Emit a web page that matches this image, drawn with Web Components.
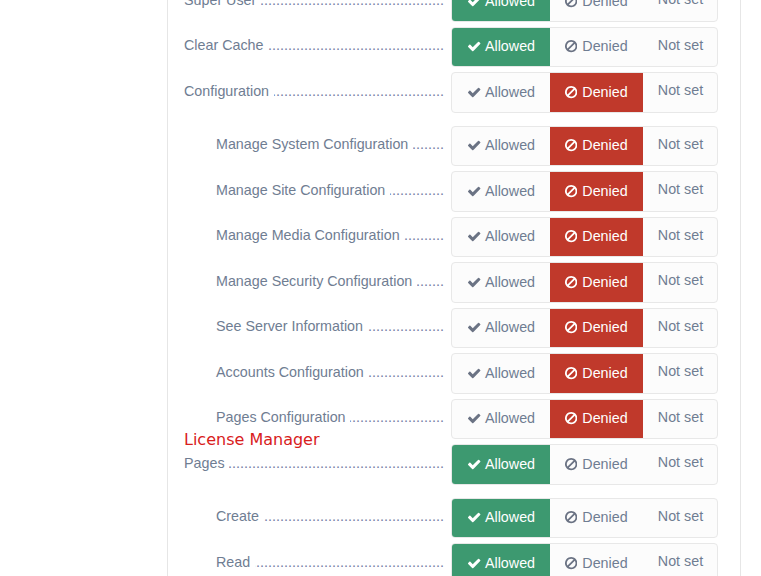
<!DOCTYPE html>
<html>
<head>
<meta charset="utf-8">
<style>
  html, body { margin: 0; height: 576px; overflow: hidden; background: #fff; }
  body { font-family: "Liberation Sans", Arial, sans-serif; }
</style>
</head>
<body>
<template id="row-template">
  <style>
    :host {
      display: flex;
      align-items: center;
      height: 40.5px;
      margin-bottom: 5px;
      font-size: 14.3px;
      color: #6f7d92;
    }
    :host([sub]) .label { padding-left: 32px; }
    :host([parent]) { margin-bottom: 13px; }
    .label {
      display: flex;
      flex: none;
      box-sizing: border-box;
      width: 260px;
      margin-right: 7px;
      white-space: nowrap;
      position: relative;
      top: -1.95px;
    }
    .dots {
      flex: 1;
      min-width: 0;
      margin-left: 4.6px;
      overflow: hidden;
      direction: rtl;
      font-size: 14.4px;
      color: #7480a4;
    }
    .group {
      display: flex;
      flex: none;
      width: 267px;
      height: 40.5px;
      box-sizing: border-box;
      border: 1px solid #e8e8e8;
      border-radius: 4px;
      background: #fcfcfc;
      overflow: hidden;
    }
    .opt {
      display: flex;
      align-items: center;
      gap: 4px;
      box-sizing: border-box;
      height: 100%;
      padding-bottom: 1.5px;
    }
    .opt svg { height: 14.4px; fill: #6b7384; flex: none; }
    .allowed { width: 98px; padding-left: 14.6px; }
    .allowed svg { width: 14.4px; }
    .denied { width: 93px; padding-left: 15px; gap: 5px; }
    .denied svg { width: 12.34px; }
    .unset { flex: 1; justify-content: center; padding: 0 0 0 1px; position: relative; top: -2.25px; }
    .allowed.on { background: #3d9970; color: #fff; }
    .denied.on { background: #c0392b; color: #fff; }
    .on svg { fill: #fff; }
  </style>
  <div class="label"><slot></slot><span class="dots">........................................................................................................</span></div>
  <div class="group">
    <div class="opt allowed"><svg viewBox="0 0 1792 1792"><path d="M1671 566q0 40-28 68l-724 724-136 136q-28 28-68 28t-68-28l-136-136-362-362q-28-28-28-68t28-68l136-136q28-28 68-28t68 28l294 295 656-657q28-28 68-28t68 28l136 136q28 28 28 68z"/></svg>Allowed</div>
    <div class="opt denied"><svg viewBox="128 0 1536 1792"><path d="M1440 893q0-161-87-295l-754 753q137 89 297 89 111 0 211.500-43.500t173.500-116.500 116-174.500 43-212.500zm-999 299l755-754q-135-91-300-91-148 0-273 73t-198 199-73 274q0 162 89 299zm1223-299q0 157-61 300t-163.500 246-245 164-298.500 61-298.500-61-245-164-163.500-246-61-300 61-299.500 163.500-245.500 245-164 298.500-61 298.500 61 245 164 163.500 245.500 61 299.500z"/></svg>Denied</div>
    <div class="opt unset">Not set</div>
  </div>
</template>

<template id="panel-template">
  <style>
    :host {
      display: block;
      box-sizing: border-box;
      width: 574px;
      margin: -18.7px 0 0 167px;
      padding: 0 22px 0 16px;
      border-left: 1px solid #e6e6e6;
      border-right: 1px solid #e6e6e6;
    }
  </style>
  <slot></slot>
</template>

<template id="heading-template">
  <style>
    :host { display: block; height: 0; position: relative; }
    div {
      position: absolute;
      left: 0;
      top: -13px;
      font: 16px/18px "DejaVu Sans", sans-serif;
      color: #d8201c;
      white-space: nowrap;
    }
  </style>
  <div><slot></slot></div>
</template>

<perm-panel>
  <perm-row value="allowed">Super User</perm-row>
  <perm-row value="allowed">Clear Cache</perm-row>
  <perm-row value="denied" parent>Configuration</perm-row>
  <perm-row value="denied" sub>Manage System Configuration</perm-row>
  <perm-row value="denied" sub>Manage Site Configuration</perm-row>
  <perm-row value="denied" sub>Manage Media Configuration</perm-row>
  <perm-row value="denied" sub>Manage Security Configuration</perm-row>
  <perm-row value="denied" sub>See Server Information</perm-row>
  <perm-row value="denied" sub>Accounts Configuration</perm-row>
  <perm-row value="denied" sub>Pages Configuration</perm-row>
  <perm-heading>License Manager</perm-heading>
  <perm-row value="allowed" parent>Pages</perm-row>
  <perm-row value="allowed" sub>Create</perm-row>
  <perm-row value="allowed" sub>Read</perm-row>
</perm-panel>

<script>
  function fromTemplate(el, id) {
    el.attachShadow({ mode: 'open' });
    el.shadowRoot.appendChild(document.getElementById(id).content.cloneNode(true));
  }

  class PermPanel extends HTMLElement {
    constructor() {
      super();
      fromTemplate(this, 'panel-template');
    }
  }

  class PermHeading extends HTMLElement {
    constructor() {
      super();
      fromTemplate(this, 'heading-template');
    }
  }

  class PermRow extends HTMLElement {
    constructor() {
      super();
      fromTemplate(this, 'row-template');
    }

    connectedCallback() {
      const value = this.getAttribute('value');
      if (value) this.shadowRoot.querySelector('.' + value).classList.add('on');
    }
  }

  customElements.define('perm-panel', PermPanel);
  customElements.define('perm-heading', PermHeading);
  customElements.define('perm-row', PermRow);
</script>
</body>
</html>
